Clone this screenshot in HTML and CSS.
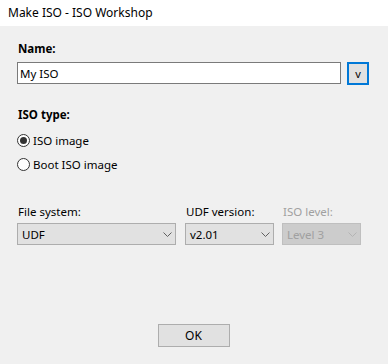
FILE: index.html
```html
<!DOCTYPE html>
<html lang="en">
<head>
    <meta charset="UTF-8">
    <title>Make ISO - ISO Workshop</title>
    <link rel="stylesheet" href="styles.css">
</head>
<body>
    <div class="window">
        <div class="titlebar">Make ISO - ISO Workshop</div>
        <div class="content">
            <div class="label bold">Name:</div>
            <div class="name-row">
                <input class="textbox" type="text" value="My ISO">
                <button class="vbtn">v</button>
            </div>

            <div class="label bold type-label">ISO type:</div>
            <label class="radio first"><span class="dot checked"></span>ISO image</label>
            <label class="radio"><span class="dot"></span>Boot ISO image</label>

            <div class="combos">
                <div class="field fs">
                    <div class="label">File system:</div>
                    <div class="combo">UDF
                        <svg class="chev" width="9" height="5" viewBox="0 0 9 5"><polyline points="0.5,0.5 4.5,4.5 8.5,0.5" fill="none" stroke="#606060" stroke-width="1"/></svg>
                    </div>
                </div>
                <div class="field udf">
                    <div class="label">UDF version:</div>
                    <div class="combo">v2.01
                        <svg class="chev" width="9" height="5" viewBox="0 0 9 5"><polyline points="0.5,0.5 4.5,4.5 8.5,0.5" fill="none" stroke="#606060" stroke-width="1"/></svg>
                    </div>
                </div>
                <div class="field lvl disabled">
                    <div class="label">ISO level:</div>
                    <div class="combo">Level 3
                        <svg class="chev" width="9" height="5" viewBox="0 0 9 5"><polyline points="0.5,0.5 4.5,4.5 8.5,0.5" fill="none" stroke="#b4b4b4" stroke-width="1"/></svg>
                    </div>
                </div>
            </div>

            <div class="footer">
                <button class="ok">OK</button>
            </div>
        </div>
    </div>
</body>
</html>
```

FILE: styles.css
```css
* {
    box-sizing: border-box;
}

body {
    margin: 0;
    width: 388px;
    height: 364px;
    background: #f0f0f0;
    font-family: "Noto Sans", "Open Sans", sans-serif;
    font-size: 11.5px;
    color: #000;
    overflow: hidden;
}

.titlebar {
    height: 26px;
    line-height: 26px;
    padding-left: 8px;
    background: #fff;
    font-size: 12px;
}

.content {
    padding: 15px 19px 0 17px;
}

.label {
    line-height: 15px;
    padding-left: 1px;
}

.bold {
    font-weight: bold;
}

.name-row {
    display: flex;
    gap: 6px;
    margin-top: 6px;
}

.textbox {
    width: 324px;
    height: 22px;
    border: 1px solid #7a7a7a;
    background: #fff;
    font: inherit;
    padding: 0 2px;
    margin: 0;
    outline: none;
}

.vbtn {
    width: 22px;
    height: 23px;
    border: 2px solid #0078d7;
    background: #e1e1e1;
    font: inherit;
    font-size: 11px;
    padding: 0;
    margin: 0;
}

.type-label {
    margin-top: 22px;
}

.radio {
    display: flex;
    align-items: center;
    height: 24px;
    gap: 3px;
}

.radio.first {
    margin-top: 6px;
}

.dot {
    width: 13px;
    height: 13px;
    border: 1px solid #333;
    border-radius: 50%;
    background: #fff;
    display: flex;
    align-items: center;
    justify-content: center;
}

.dot.checked::after {
    content: "";
    width: 7px;
    height: 7px;
    border-radius: 50%;
    background: #333;
}

.combos {
    display: flex;
    margin-top: 28px;
}

.fs {
    width: 168px;
}

.udf {
    width: 97px;
}

.lvl {
    width: 79px;
}

.combos .label {
    margin-bottom: 4px;
}

.combo {
    height: 22px;
    border: 1px solid #adadad;
    background: #e1e1e1;
    display: flex;
    align-items: center;
    justify-content: space-between;
    padding: 0 3px 0 4px;
}

.fs .combo {
    width: 159px;
}

.udf .combo {
    width: 89px;
}

.lvl .combo {
    width: 79px;
}

.disabled .label,
.disabled .combo {
    color: #a0a0a0;
}

.disabled .combo {
    background: #cccccc;
    border-color: #bfbfbf;
}

.footer {
    display: flex;
    justify-content: center;
    margin-top: 79px;
    padding-right: 0;
}

.ok {
    width: 72px;
    height: 23px;
    border: 1px solid #adadad;
    background: #e1e1e1;
    font: inherit;
    font-size: 12px;
    margin: 0;
    margin-left: 1px;
}
```
